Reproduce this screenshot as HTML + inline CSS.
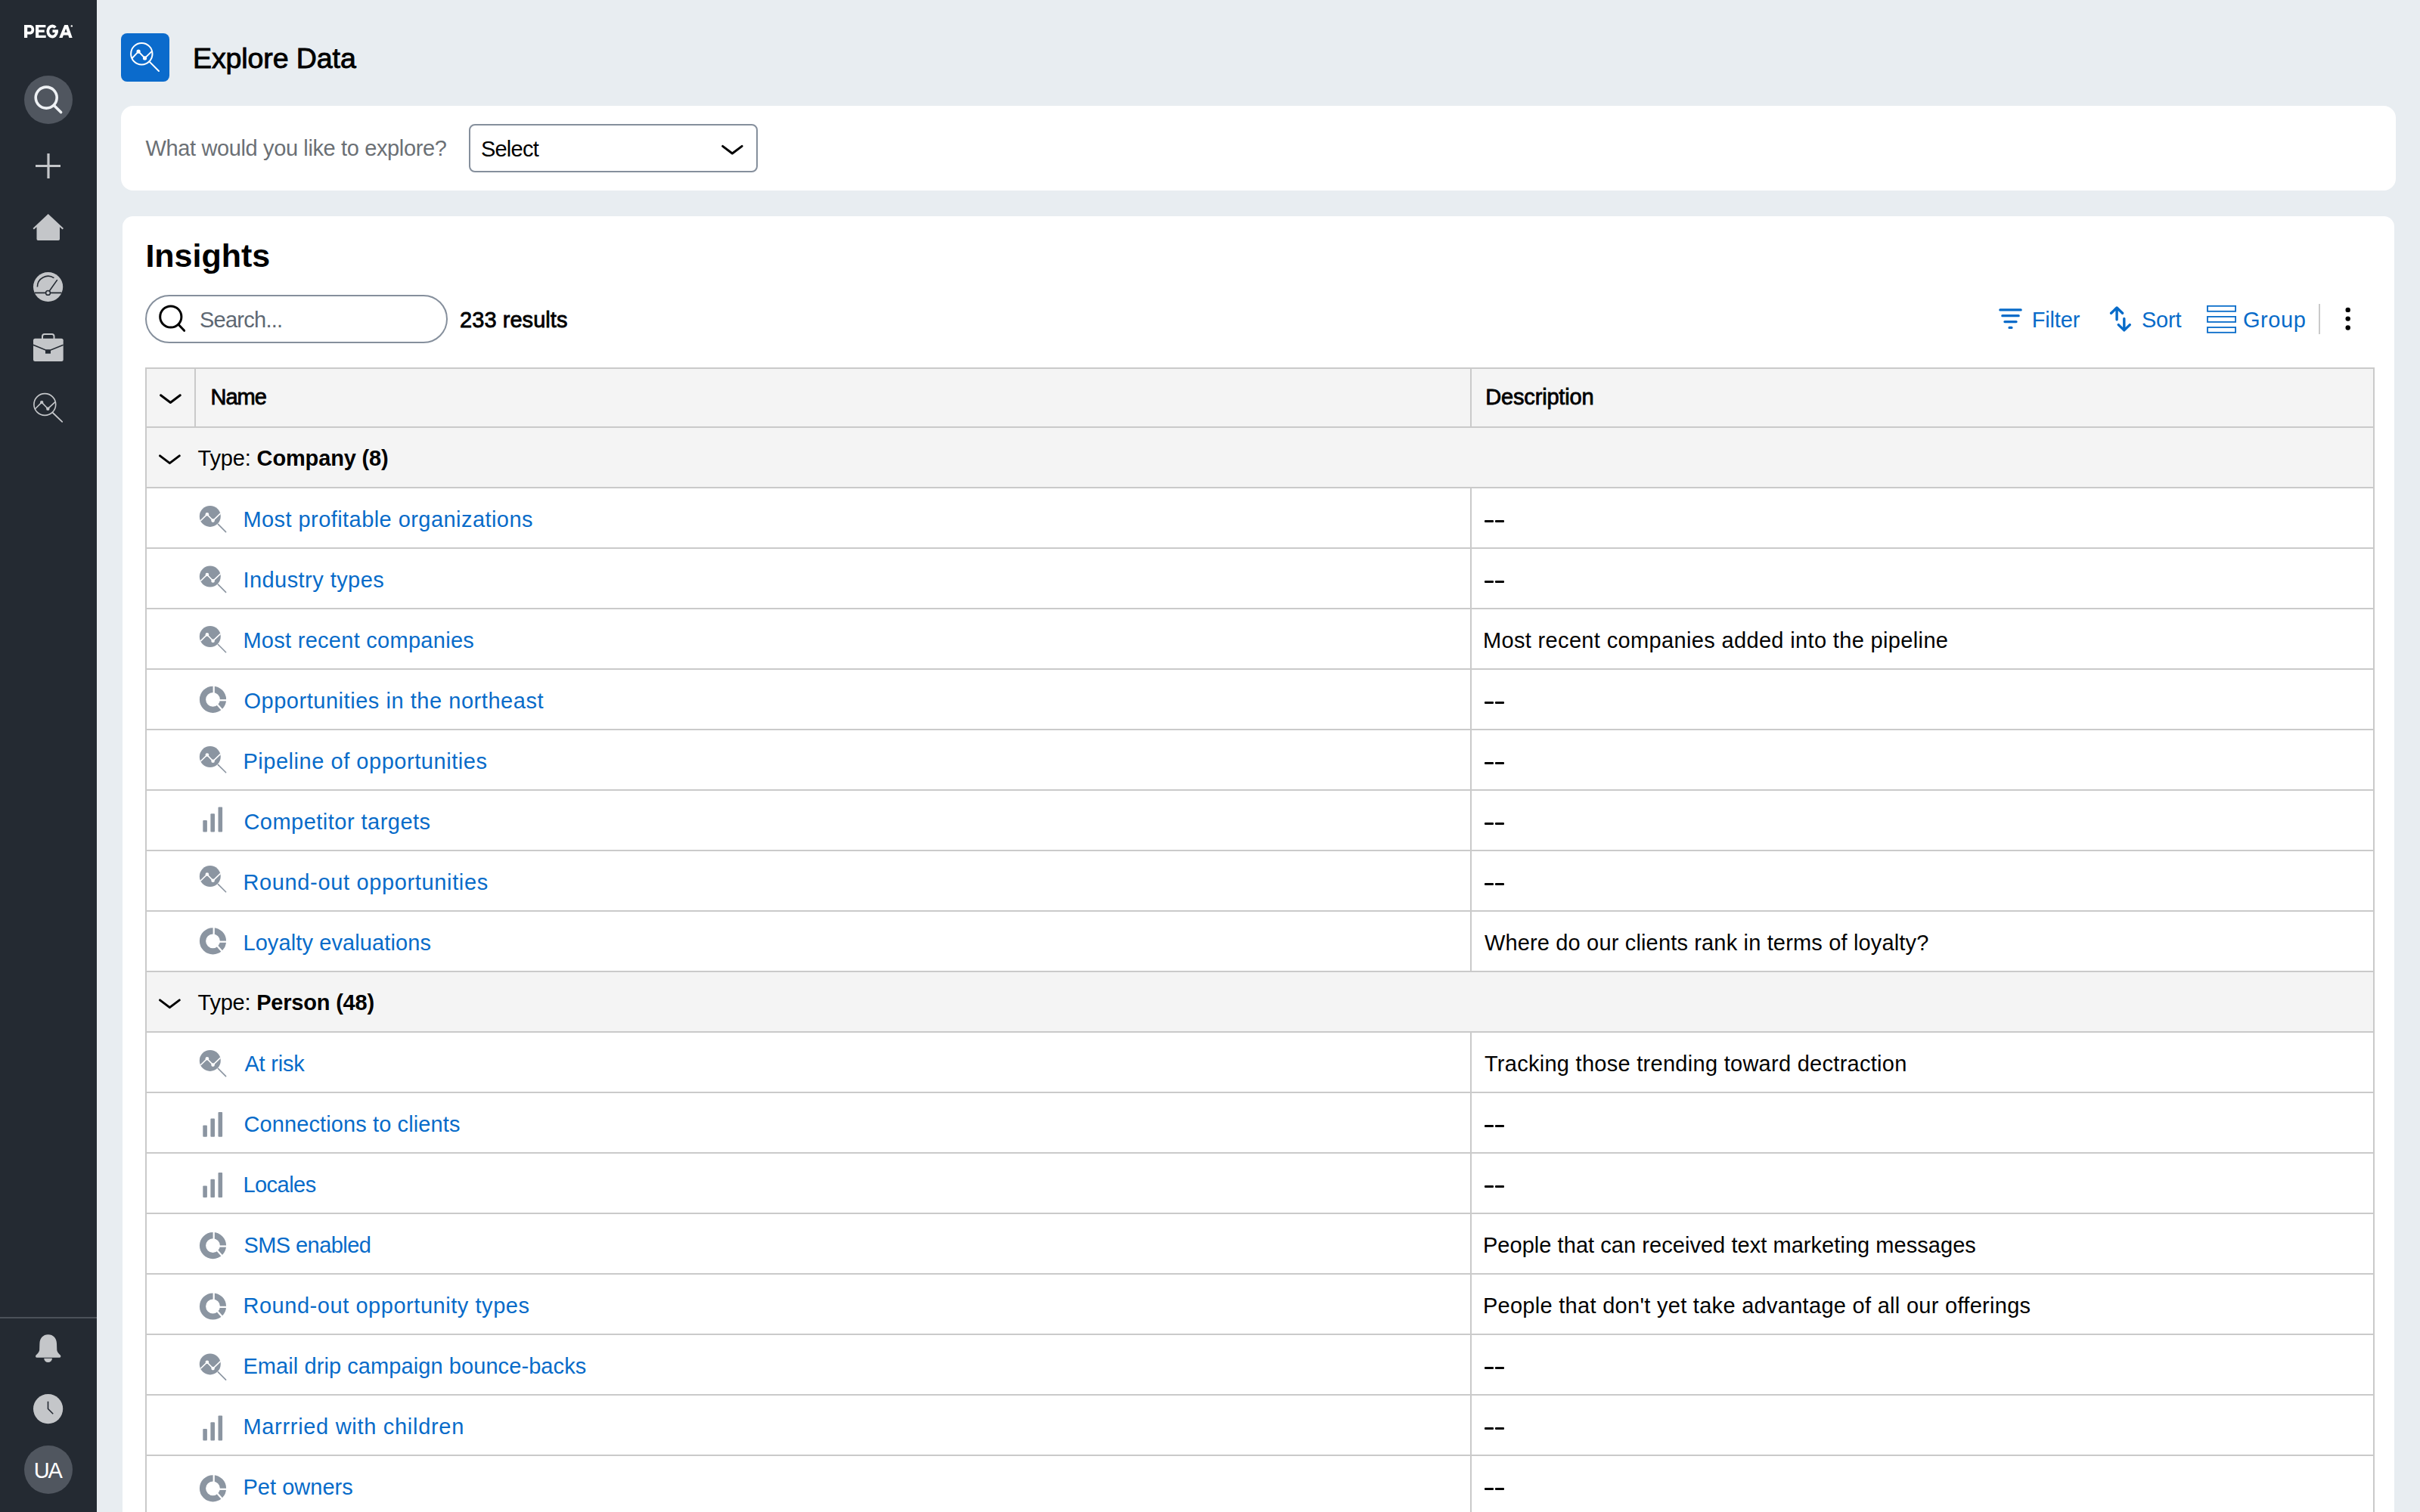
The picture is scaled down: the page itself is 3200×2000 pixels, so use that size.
<!DOCTYPE html>
<html><head><meta charset="utf-8"><title>Explore Data</title>
<style>
html,body{margin:0;padding:0;}
body{width:3200px;height:2000px;overflow:hidden;background:#e8edf1;position:relative;font-family:"Liberation Sans",sans-serif;}
.t{position:absolute;white-space:nowrap;line-height:1;font-family:"Liberation Sans",sans-serif;}
.abs{position:absolute;}
svg{position:absolute;left:0;top:0;overflow:visible;}
@media (max-width:2400px) and (min-resolution:2dppx){html{zoom:0.5;}}
</style></head><body>
<div class="abs" style="left:0;top:0;width:128px;height:2000px;background:#242a32;"></div>
<div class="abs" style="left:0;top:1742px;width:128px;height:2px;background:#4b5159;"></div>
<svg width="128" height="60" viewBox="0 0 128 60"><g fill="#fff" fill-rule="evenodd">
<path d="M32 33 H39.5 C43 33 45.2 35.5 45.2 39.2 C45.2 43 43 45.5 39.5 45.5 H36.2 V50.1 H32 Z M36.2 36.5 H39.2 C40.7 36.5 41.5 37.6 41.5 39.2 C41.5 40.7 40.7 41.8 39.2 41.8 H36.2 Z"/>
<path d="M47.1 33 H60.4 V36.3 H51.2 V39.4 H58.7 V42.8 H51.2 V46.7 H60.7 V50.1 H47.1 Z"/>
<path d="M73.29 36.55 A5.85 7 0 1 0 75 41.5" fill="none" stroke="#fff" stroke-width="3.8"/>
<rect x="69.5" y="39.3" width="7.4" height="3.8"/>
<path d="M85.2 32.9 H89.8 L95.7 50.1 H91.4 L90.2 46.4 H83.9 L82.6 50.1 H78.2 Z M87.1 37.8 L88.9 42.8 H85.3 Z"/>
<circle cx="94.8" cy="34.4" r="1.2"/>
</g></svg>
<svg width="128" height="2000" viewBox="0 0 128 2000">
<circle cx="64" cy="132" r="32" fill="#50565f"/>
<circle cx="61.2" cy="129.1" r="14" fill="none" stroke="#eef1f4" stroke-width="3.6"/>
<line x1="71.5" y1="139.5" x2="80.6" y2="148.6" stroke="#eef1f4" stroke-width="3.6" stroke-linecap="round"/>
<path d="M64 203 V236 M47 219.5 H80" stroke="#c4c6c9" stroke-width="3.2" fill="none"/>
<path d="M63.7 283 L84 302 L82.6 303.4 L79 300.2 L79 316.3 Q79 318 77.3 318 L50.2 318 Q48.5 318 48.5 316.3 L48.5 300.2 L44.9 303.4 L43.5 302 Z" fill="#c4c6c9"/>
<circle cx="63.6" cy="379.5" r="19.6" fill="#c4c6c9"/>
<path d="M49.4 379.5 A14.2 14.2 0 0 1 71.44 367.66" fill="none" stroke="#242a32" stroke-width="1.6"/>
<path d="M45.6 387.4 H81.6" stroke="#242a32" stroke-width="1.6"/>
<circle cx="63.5" cy="387.4" r="2.9" fill="#c4c6c9" stroke="#242a32" stroke-width="1.5"/>
<path d="M65.4 384.8 L75.4 370.6" stroke="#242a32" stroke-width="1.6" stroke-linecap="round"/>
<rect x="56" y="442" width="15.5" height="10" rx="3" fill="none" stroke="#c4c6c9" stroke-width="2"/>
<rect x="44" y="447.7" width="39.7" height="30.2" rx="2.5" fill="#c4c6c9"/>
<path d="M44 456.3 L60.3 463 L67 463 L83.7 456.3" fill="none" stroke="#242a32" stroke-width="1.6"/>
<rect x="60" y="463" width="7" height="4.7" fill="#242a32"/>
<circle cx="59.3" cy="535" r="14.4" fill="none" stroke="#c4c6c9" stroke-width="1.6"/>
<polyline points="46.3,541 55.2,532.1 63.3,540.7 73,531.6" fill="none" stroke="#c4c6c9" stroke-width="1.6"/>
<circle cx="55.2" cy="532.1" r="2.2" fill="#c4c6c9"/>
<circle cx="63.3" cy="540.7" r="2.2" fill="#c4c6c9"/>
<line x1="69.8" y1="546" x2="82.2" y2="557.8" stroke="#c4c6c9" stroke-width="1.8" stroke-linecap="round"/>
<path d="M63.6 1765.2 C57 1765.2 52.6 1770 52.4 1777 L52.1 1786 C51.6 1789 49.3 1791 47.6 1792.6 C46.6 1793.6 47 1795.7 48.6 1795.7 L78.8 1795.7 C80.4 1795.7 80.8 1793.6 79.8 1792.6 C78.1 1791 75.8 1789 75.3 1786 L75 1777 C74.8 1770 70.4 1765.2 63.6 1765.2 Z" fill="#c4c6c9"/>
<path d="M58.2 1796.8 A5.4 5.2 0 0 0 69 1796.8 Z" fill="#c4c6c9"/>
<circle cx="63.6" cy="1863.6" r="19.6" fill="#c4c6c9"/>
<path d="M63.5 1853.7 V1863.5 L70.2 1870.2" fill="none" stroke="#242a32" stroke-width="1.6"/>
<circle cx="64" cy="1944" r="32" fill="#50565f"/>
</svg>
<div class="t" style="left:44.8px;top:1930.7px;font-size:29px;font-weight:400;color:#fff;letter-spacing:-2.20px;">UA</div>
<svg width="3200" height="120" viewBox="0 0 3200 120">
<rect x="160" y="44" width="64" height="64" rx="8" fill="#0b6bcc"/>
<circle cx="187.3" cy="71.2" r="14.2" fill="none" stroke="#fff" stroke-width="2"/>
<polyline points="174.6,77.1 183.1,68.1 191.5,76.9 200.5,68.1" fill="none" stroke="#fff" stroke-width="2"/>
<circle cx="183.1" cy="68.1" r="2.6" fill="#fff"/>
<circle cx="191.5" cy="76.9" r="2.6" fill="#fff"/>
<line x1="197.4" y1="81.4" x2="210" y2="94" stroke="#fff" stroke-width="2" stroke-linecap="round"/>
</svg>
<div class="t" style="left:255.0px;top:59.0px;font-size:37.5px;font-weight:400;color:#000;letter-spacing:-0.09px;-webkit-text-stroke:0.9px #000;">Explore Data</div>
<div class="abs" style="left:160px;top:140px;width:3008px;height:112px;border-radius:16px;background:#fff;"></div>
<div class="t" style="left:192.5px;top:181.8px;font-size:29px;font-weight:400;color:#6b7075;letter-spacing:-0.37px;">What would you like to explore?</div>
<div class="abs" style="left:620px;top:164px;width:378px;height:60px;border:2px solid #858f9c;border-radius:8px;background:#fff;"></div>
<div class="t" style="left:635.9px;top:182.7px;font-size:29px;font-weight:400;color:#000;letter-spacing:-0.76px;">Select</div>
<svg width="3200" height="260" viewBox="0 0 3200 260">
<path d="M955.6 193.4 L968.3 203 L981.1 193.4" fill="none" stroke="#000" stroke-width="3" stroke-linecap="round" stroke-linejoin="round"/>
</svg>
<div class="abs" style="left:162px;top:286px;width:3004px;height:1800px;border-radius:14px;background:#fff;"></div>
<div class="t" style="left:192.4px;top:317.3px;font-size:43px;font-weight:700;color:#000;letter-spacing:-0.00px;">Insights</div>
<div class="abs" style="left:192px;top:390px;width:396px;height:60px;border:2px solid #858f9c;border-radius:32px;background:#fff;"></div>
<svg width="3200" height="480" viewBox="0 0 3200 480">
<circle cx="225.8" cy="419" r="14.1" fill="none" stroke="#000" stroke-width="3"/>
<line x1="236" y1="429.2" x2="243.6" y2="437.3" stroke="#000" stroke-width="3" stroke-linecap="round"/>
<path d="M2644.8 409.9 H2672.2 M2647.8 417.7 H2669.2 M2650.9 425.6 H2666.1 M2657 433.4 H2660" stroke="#076bc9" stroke-width="3.2" stroke-linecap="round" fill="none"/>
<path d="M2799.1 422.8 V407.6 M2791.6 414.3 L2799.1 407 L2806.6 414.3 M2808.8 421.4 V436.4 M2801.3 429.6 L2808.8 436.9 L2816.3 429.6" stroke="#076bc9" stroke-width="3.4" stroke-linecap="round" stroke-linejoin="round" fill="none"/>
<rect x="2919" y="404.8" width="37.1" height="7" fill="none" stroke="#076bc9" stroke-width="1.8"/>
<rect x="2919" y="418.9" width="37.1" height="7" fill="none" stroke="#076bc9" stroke-width="1.8"/>
<rect x="2919" y="433" width="37.1" height="6.8" fill="none" stroke="#076bc9" stroke-width="1.8"/>
<rect x="3066" y="402" width="2" height="40" fill="#cacaca"/>
<circle cx="3104.7" cy="409.9" r="3.2" fill="#000"/>
<circle cx="3104.7" cy="421.6" r="3.2" fill="#000"/>
<circle cx="3104.7" cy="433.5" r="3.2" fill="#000"/>
</svg>
<div class="t" style="left:264.0px;top:408.7px;font-size:29px;font-weight:400;color:#5e6873;letter-spacing:-0.75px;">Search...</div>
<div class="t" style="left:608.0px;top:408.7px;font-size:29px;font-weight:400;color:#000;letter-spacing:0.06px;-webkit-text-stroke:0.8px #000;">233 results</div>
<div class="t" style="left:2686.7px;top:408.7px;font-size:29px;font-weight:400;color:#076bc9;letter-spacing:-0.16px;">Filter</div>
<div class="t" style="left:2831.9px;top:408.7px;font-size:29px;font-weight:400;color:#076bc9;letter-spacing:-0.20px;">Sort</div>
<div class="t" style="left:2966.0px;top:408.7px;font-size:29px;font-weight:400;color:#076bc9;letter-spacing:0.55px;">Group</div>
<div class="abs" style="left:192px;top:486px;width:2944px;height:1600px;border:2px solid #cacaca;background:#fff;"></div>
<div class="abs" style="left:194px;top:488px;width:2944px;height:76px;background:#f4f4f4;"></div>
<div class="abs" style="left:194px;top:564px;width:2944px;height:2px;background:#cacaca;"></div>
<div class="abs" style="left:257px;top:488px;width:2px;height:76px;background:#cacaca;"></div>
<div class="abs" style="left:1944px;top:488px;width:2px;height:76px;background:#cacaca;"></div>
<div class="t" style="left:278.4px;top:511.0px;font-size:29px;font-weight:400;color:#000;letter-spacing:-0.93px;-webkit-text-stroke:0.8px #000;">Name</div>
<div class="t" style="left:1964.3px;top:510.9px;font-size:29px;font-weight:400;color:#000;letter-spacing:-0.18px;-webkit-text-stroke:0.8px #000;">Description</div>
<div class="abs" style="left:194px;top:566px;width:2944px;height:78px;background:#f4f4f4;"></div>
<div class="abs" style="left:194px;top:644px;width:2944px;height:2px;background:#cacaca;"></div>
<div class="t" style="left:261.5px;top:591.9px;font-size:29px;font-weight:400;color:#000;letter-spacing:-0.15px;">Type: <b>Company (8)</b></div>
<div class="abs" style="left:194px;top:724px;width:2944px;height:2px;background:#cacaca;"></div>
<div class="abs" style="left:1944px;top:646px;width:2px;height:78px;background:#cacaca;"></div>
<div class="t" style="left:321.4px;top:672.9px;font-size:29px;font-weight:400;color:#076bc9;letter-spacing:0.44px;">Most profitable organizations</div>
<div class="abs" style="left:1963px;top:688.3px;width:12px;height:2.4px;background:#000;border-radius:1px;"></div>
<div class="abs" style="left:1977px;top:688.3px;width:12px;height:2.4px;background:#000;border-radius:1px;"></div>
<div class="abs" style="left:194px;top:804px;width:2944px;height:2px;background:#cacaca;"></div>
<div class="abs" style="left:1944px;top:726px;width:2px;height:78px;background:#cacaca;"></div>
<div class="t" style="left:321.4px;top:752.9px;font-size:29px;font-weight:400;color:#076bc9;letter-spacing:0.45px;">Industry types</div>
<div class="abs" style="left:1963px;top:768.3px;width:12px;height:2.4px;background:#000;border-radius:1px;"></div>
<div class="abs" style="left:1977px;top:768.3px;width:12px;height:2.4px;background:#000;border-radius:1px;"></div>
<div class="abs" style="left:194px;top:884px;width:2944px;height:2px;background:#cacaca;"></div>
<div class="abs" style="left:1944px;top:806px;width:2px;height:78px;background:#cacaca;"></div>
<div class="t" style="left:321.4px;top:832.9px;font-size:29px;font-weight:400;color:#076bc9;letter-spacing:0.28px;">Most recent companies</div>
<div class="t" style="left:1960.9px;top:832.9px;font-size:29px;font-weight:400;color:#000;letter-spacing:0.35px;">Most recent companies added into the pipeline</div>
<div class="abs" style="left:194px;top:964px;width:2944px;height:2px;background:#cacaca;"></div>
<div class="abs" style="left:1944px;top:886px;width:2px;height:78px;background:#cacaca;"></div>
<div class="t" style="left:322.4px;top:912.9px;font-size:29px;font-weight:400;color:#076bc9;letter-spacing:0.54px;">Opportunities in the northeast</div>
<div class="abs" style="left:1963px;top:928.3px;width:12px;height:2.4px;background:#000;border-radius:1px;"></div>
<div class="abs" style="left:1977px;top:928.3px;width:12px;height:2.4px;background:#000;border-radius:1px;"></div>
<div class="abs" style="left:194px;top:1044px;width:2944px;height:2px;background:#cacaca;"></div>
<div class="abs" style="left:1944px;top:966px;width:2px;height:78px;background:#cacaca;"></div>
<div class="t" style="left:321.4px;top:992.9px;font-size:29px;font-weight:400;color:#076bc9;letter-spacing:0.54px;">Pipeline of opportunities</div>
<div class="abs" style="left:1963px;top:1008.3px;width:12px;height:2.4px;background:#000;border-radius:1px;"></div>
<div class="abs" style="left:1977px;top:1008.3px;width:12px;height:2.4px;background:#000;border-radius:1px;"></div>
<div class="abs" style="left:194px;top:1124px;width:2944px;height:2px;background:#cacaca;"></div>
<div class="abs" style="left:1944px;top:1046px;width:2px;height:78px;background:#cacaca;"></div>
<div class="t" style="left:322.4px;top:1072.9px;font-size:29px;font-weight:400;color:#076bc9;letter-spacing:0.48px;">Competitor targets</div>
<div class="abs" style="left:1963px;top:1088.3px;width:12px;height:2.4px;background:#000;border-radius:1px;"></div>
<div class="abs" style="left:1977px;top:1088.3px;width:12px;height:2.4px;background:#000;border-radius:1px;"></div>
<div class="abs" style="left:194px;top:1204px;width:2944px;height:2px;background:#cacaca;"></div>
<div class="abs" style="left:1944px;top:1126px;width:2px;height:78px;background:#cacaca;"></div>
<div class="t" style="left:321.4px;top:1152.9px;font-size:29px;font-weight:400;color:#076bc9;letter-spacing:0.65px;">Round-out opportunities</div>
<div class="abs" style="left:1963px;top:1168.3px;width:12px;height:2.4px;background:#000;border-radius:1px;"></div>
<div class="abs" style="left:1977px;top:1168.3px;width:12px;height:2.4px;background:#000;border-radius:1px;"></div>
<div class="abs" style="left:194px;top:1284px;width:2944px;height:2px;background:#cacaca;"></div>
<div class="abs" style="left:1944px;top:1206px;width:2px;height:78px;background:#cacaca;"></div>
<div class="t" style="left:321.4px;top:1232.9px;font-size:29px;font-weight:400;color:#076bc9;letter-spacing:0.11px;">Loyalty evaluations</div>
<div class="t" style="left:1962.9px;top:1232.9px;font-size:29px;font-weight:400;color:#000;letter-spacing:0.16px;">Where do our clients rank in terms of loyalty?</div>
<div class="abs" style="left:194px;top:1286px;width:2944px;height:78px;background:#f4f4f4;"></div>
<div class="abs" style="left:194px;top:1364px;width:2944px;height:2px;background:#cacaca;"></div>
<div class="t" style="left:261.5px;top:1311.9px;font-size:29px;font-weight:400;color:#000;letter-spacing:-0.21px;">Type: <b>Person (48)</b></div>
<div class="abs" style="left:194px;top:1444px;width:2944px;height:2px;background:#cacaca;"></div>
<div class="abs" style="left:1944px;top:1366px;width:2px;height:78px;background:#cacaca;"></div>
<div class="t" style="left:323.4px;top:1392.9px;font-size:29px;font-weight:400;color:#076bc9;letter-spacing:-0.20px;">At risk</div>
<div class="t" style="left:1962.9px;top:1392.9px;font-size:29px;font-weight:400;color:#000;letter-spacing:0.28px;">Tracking those trending toward dectraction</div>
<div class="abs" style="left:194px;top:1524px;width:2944px;height:2px;background:#cacaca;"></div>
<div class="abs" style="left:1944px;top:1446px;width:2px;height:78px;background:#cacaca;"></div>
<div class="t" style="left:322.4px;top:1472.9px;font-size:29px;font-weight:400;color:#076bc9;letter-spacing:0.11px;">Connections to clients</div>
<div class="abs" style="left:1963px;top:1488.3px;width:12px;height:2.4px;background:#000;border-radius:1px;"></div>
<div class="abs" style="left:1977px;top:1488.3px;width:12px;height:2.4px;background:#000;border-radius:1px;"></div>
<div class="abs" style="left:194px;top:1604px;width:2944px;height:2px;background:#cacaca;"></div>
<div class="abs" style="left:1944px;top:1526px;width:2px;height:78px;background:#cacaca;"></div>
<div class="t" style="left:321.4px;top:1552.9px;font-size:29px;font-weight:400;color:#076bc9;letter-spacing:-0.53px;">Locales</div>
<div class="abs" style="left:1963px;top:1568.3px;width:12px;height:2.4px;background:#000;border-radius:1px;"></div>
<div class="abs" style="left:1977px;top:1568.3px;width:12px;height:2.4px;background:#000;border-radius:1px;"></div>
<div class="abs" style="left:194px;top:1684px;width:2944px;height:2px;background:#cacaca;"></div>
<div class="abs" style="left:1944px;top:1606px;width:2px;height:78px;background:#cacaca;"></div>
<div class="t" style="left:322.4px;top:1632.9px;font-size:29px;font-weight:400;color:#076bc9;letter-spacing:-0.56px;">SMS enabled</div>
<div class="t" style="left:1960.9px;top:1632.9px;font-size:29px;font-weight:400;color:#000;letter-spacing:0.05px;">People that can received text marketing messages</div>
<div class="abs" style="left:194px;top:1764px;width:2944px;height:2px;background:#cacaca;"></div>
<div class="abs" style="left:1944px;top:1686px;width:2px;height:78px;background:#cacaca;"></div>
<div class="t" style="left:321.4px;top:1712.9px;font-size:29px;font-weight:400;color:#076bc9;letter-spacing:0.55px;">Round-out opportunity types</div>
<div class="t" style="left:1960.9px;top:1712.9px;font-size:29px;font-weight:400;color:#000;letter-spacing:0.29px;">People that don&#39;t yet take advantage of all our offerings</div>
<div class="abs" style="left:194px;top:1844px;width:2944px;height:2px;background:#cacaca;"></div>
<div class="abs" style="left:1944px;top:1766px;width:2px;height:78px;background:#cacaca;"></div>
<div class="t" style="left:321.4px;top:1792.9px;font-size:29px;font-weight:400;color:#076bc9;letter-spacing:0.08px;">Email drip campaign bounce-backs</div>
<div class="abs" style="left:1963px;top:1808.3px;width:12px;height:2.4px;background:#000;border-radius:1px;"></div>
<div class="abs" style="left:1977px;top:1808.3px;width:12px;height:2.4px;background:#000;border-radius:1px;"></div>
<div class="abs" style="left:194px;top:1924px;width:2944px;height:2px;background:#cacaca;"></div>
<div class="abs" style="left:1944px;top:1846px;width:2px;height:78px;background:#cacaca;"></div>
<div class="t" style="left:321.4px;top:1872.9px;font-size:29px;font-weight:400;color:#076bc9;letter-spacing:0.70px;">Marrried with children</div>
<div class="abs" style="left:1963px;top:1888.3px;width:12px;height:2.4px;background:#000;border-radius:1px;"></div>
<div class="abs" style="left:1977px;top:1888.3px;width:12px;height:2.4px;background:#000;border-radius:1px;"></div>
<div class="abs" style="left:194px;top:2004px;width:2944px;height:2px;background:#cacaca;"></div>
<div class="abs" style="left:1944px;top:1926px;width:2px;height:78px;background:#cacaca;"></div>
<div class="t" style="left:321.4px;top:1952.9px;font-size:29px;font-weight:400;color:#076bc9;letter-spacing:0.04px;">Pet owners</div>
<div class="abs" style="left:1963px;top:1968.3px;width:12px;height:2.4px;background:#000;border-radius:1px;"></div>
<div class="abs" style="left:1977px;top:1968.3px;width:12px;height:2.4px;background:#000;border-radius:1px;"></div>
<svg width="3200" height="2000" viewBox="0 0 3200 2000"><path d="M211.5 602.9 L224.4 612.6 L237.3 602.9" fill="none" stroke="#000" stroke-width="3" stroke-linecap="round" stroke-linejoin="round"/><circle cx="277.8" cy="682.9" r="14" fill="#8b95a1"/><polyline points="265.3,688.8 273.8,680.4 281.7,688.6 291.5,679.2" fill="none" stroke="#fff" stroke-width="1.6"/><circle cx="273.9" cy="680.3" r="2.3" fill="#fff"/><circle cx="281.6" cy="688.6" r="2.3" fill="#fff"/><line x1="288.4" y1="693.4" x2="298.6" y2="703.6" stroke="#8b95a1" stroke-width="1.6" stroke-linecap="round"/><circle cx="277.8" cy="762.6" r="14" fill="#8b95a1"/><polyline points="265.3,768.5 273.8,760.1 281.7,768.4 291.5,759.0" fill="none" stroke="#fff" stroke-width="1.6"/><circle cx="273.9" cy="760.0" r="2.3" fill="#fff"/><circle cx="281.6" cy="768.4" r="2.3" fill="#fff"/><line x1="288.4" y1="773.1" x2="298.6" y2="783.4" stroke="#8b95a1" stroke-width="1.6" stroke-linecap="round"/><circle cx="277.8" cy="842.0" r="14" fill="#8b95a1"/><polyline points="265.3,847.9 273.8,839.5 281.7,847.7 291.5,838.3" fill="none" stroke="#fff" stroke-width="1.6"/><circle cx="273.9" cy="839.4" r="2.3" fill="#fff"/><circle cx="281.6" cy="847.7" r="2.3" fill="#fff"/><line x1="288.4" y1="852.5" x2="298.6" y2="862.7" stroke="#8b95a1" stroke-width="1.6" stroke-linecap="round"/><circle cx="281.5" cy="925.3" r="13.5" fill="none" stroke="#8b95a1" stroke-width="8.2"/><rect x="281.6" y="906.3" width="2.2" height="19" fill="#fff"/><rect x="282" y="925.1" width="19" height="2.2" fill="#fff"/><line x1="283" y1="926.9" x2="296.3" y2="941.9" stroke="#fff" stroke-width="2.3"/><circle cx="277.8" cy="1001.1" r="14" fill="#8b95a1"/><polyline points="265.3,1007.0 273.8,998.6 281.7,1006.8 291.5,997.4" fill="none" stroke="#fff" stroke-width="1.6"/><circle cx="273.9" cy="998.5" r="2.3" fill="#fff"/><circle cx="281.6" cy="1006.8" r="2.3" fill="#fff"/><line x1="288.4" y1="1011.6" x2="298.6" y2="1021.8" stroke="#8b95a1" stroke-width="1.6" stroke-linecap="round"/><rect x="268.3" y="1085.0" width="5.6" height="15.4" rx="1" fill="#8b95a1"/><rect x="278.4" y="1076.2" width="5.6" height="24.2" rx="1" fill="#8b95a1"/><rect x="288.5" y="1067.5" width="5.6" height="32.9" rx="1" fill="#8b95a1"/><circle cx="277.8" cy="1159.1" r="14" fill="#8b95a1"/><polyline points="265.3,1165.0 273.8,1156.6 281.7,1164.8 291.5,1155.4" fill="none" stroke="#fff" stroke-width="1.6"/><circle cx="273.9" cy="1156.5" r="2.3" fill="#fff"/><circle cx="281.6" cy="1164.8" r="2.3" fill="#fff"/><line x1="288.4" y1="1169.6" x2="298.6" y2="1179.8" stroke="#8b95a1" stroke-width="1.6" stroke-linecap="round"/><circle cx="281.5" cy="1244.8" r="13.5" fill="none" stroke="#8b95a1" stroke-width="8.2"/><rect x="281.6" y="1225.8" width="2.2" height="19" fill="#fff"/><rect x="282" y="1244.6" width="19" height="2.2" fill="#fff"/><line x1="283" y1="1246.4" x2="296.3" y2="1261.4" stroke="#fff" stroke-width="2.3"/><path d="M211.5 1322.9 L224.4 1332.6 L237.3 1322.9" fill="none" stroke="#000" stroke-width="3" stroke-linecap="round" stroke-linejoin="round"/><circle cx="277.8" cy="1402.9" r="14" fill="#8b95a1"/><polyline points="265.3,1408.8 273.8,1400.4 281.7,1408.6 291.5,1399.2" fill="none" stroke="#fff" stroke-width="1.6"/><circle cx="273.9" cy="1400.3" r="2.3" fill="#fff"/><circle cx="281.6" cy="1408.6" r="2.3" fill="#fff"/><line x1="288.4" y1="1413.4" x2="298.6" y2="1423.6" stroke="#8b95a1" stroke-width="1.6" stroke-linecap="round"/><rect x="268.3" y="1488.4" width="5.6" height="15.4" rx="1" fill="#8b95a1"/><rect x="278.4" y="1479.6" width="5.6" height="24.2" rx="1" fill="#8b95a1"/><rect x="288.5" y="1470.9" width="5.6" height="32.9" rx="1" fill="#8b95a1"/><rect x="268.3" y="1568.6" width="5.6" height="15.4" rx="1" fill="#8b95a1"/><rect x="278.4" y="1559.8" width="5.6" height="24.2" rx="1" fill="#8b95a1"/><rect x="288.5" y="1551.1" width="5.6" height="32.9" rx="1" fill="#8b95a1"/><circle cx="281.5" cy="1647.6" r="13.5" fill="none" stroke="#8b95a1" stroke-width="8.2"/><rect x="281.6" y="1628.6" width="2.2" height="19" fill="#fff"/><rect x="282" y="1647.4" width="19" height="2.2" fill="#fff"/><line x1="283" y1="1649.2" x2="296.3" y2="1664.2" stroke="#fff" stroke-width="2.3"/><circle cx="281.5" cy="1728.0" r="13.5" fill="none" stroke="#8b95a1" stroke-width="8.2"/><rect x="281.6" y="1709.0" width="2.2" height="19" fill="#fff"/><rect x="282" y="1727.8" width="19" height="2.2" fill="#fff"/><line x1="283" y1="1729.6" x2="296.3" y2="1744.6" stroke="#fff" stroke-width="2.3"/><circle cx="277.8" cy="1804.4" r="14" fill="#8b95a1"/><polyline points="265.3,1810.3 273.8,1801.9 281.7,1810.1 291.5,1800.7" fill="none" stroke="#fff" stroke-width="1.6"/><circle cx="273.9" cy="1801.8" r="2.3" fill="#fff"/><circle cx="281.6" cy="1810.1" r="2.3" fill="#fff"/><line x1="288.4" y1="1814.9" x2="298.6" y2="1825.1" stroke="#8b95a1" stroke-width="1.6" stroke-linecap="round"/><rect x="268.3" y="1890.0" width="5.6" height="15.4" rx="1" fill="#8b95a1"/><rect x="278.4" y="1881.2" width="5.6" height="24.2" rx="1" fill="#8b95a1"/><rect x="288.5" y="1872.5" width="5.6" height="32.9" rx="1" fill="#8b95a1"/><circle cx="281.5" cy="1968.8" r="13.5" fill="none" stroke="#8b95a1" stroke-width="8.2"/><rect x="281.6" y="1949.8" width="2.2" height="19" fill="#fff"/><rect x="282" y="1968.7" width="19" height="2.2" fill="#fff"/><line x1="283" y1="1970.4" x2="296.3" y2="1985.4" stroke="#fff" stroke-width="2.3"/><path d="M212.5 522.8 L225.4 532.5 L238.3 522.8" fill="none" stroke="#000" stroke-width="3" stroke-linecap="round" stroke-linejoin="round"/></svg>
</body></html>
